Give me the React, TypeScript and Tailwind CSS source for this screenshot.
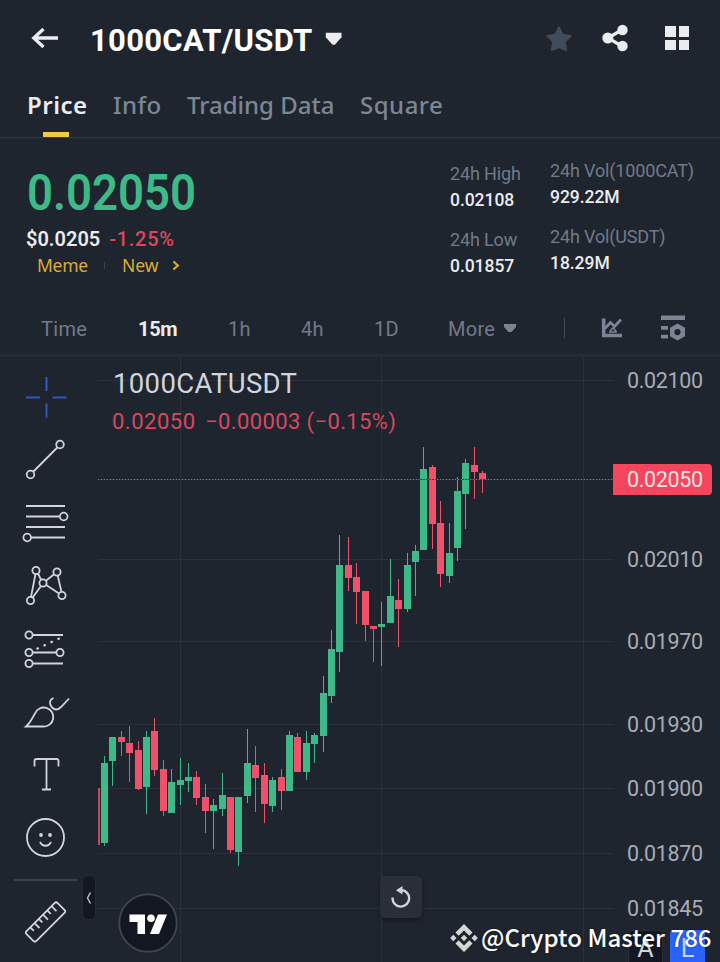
import { ReactNode } from "react";
import clsx from "clsx";

type Candle = {
  x: number;
  high: number;
  top: number;
  bottom: number;
  low: number;
  up: boolean;
};

const UP = "#3dba87";
const DOWN = "#f0506a";

// x, high, body top, body bottom, low, up
const rows: [number, number, number, number, number, 0 | 1][] = [
  [104, 756, 763, 843, 846, 1],
  [112, 737, 737, 761, 786, 1],
  [121, 731, 737, 742, 756, 0],
  [129, 726, 743, 753, 782, 0],
  [138, 741, 750, 789, 790, 0],
  [146, 731, 737, 787, 814, 1],
  [154, 718, 731, 770, 776, 0],
  [163, 760, 769, 811, 816, 0],
  [171, 769, 782, 813, 813, 1],
  [180, 758, 780, 785, 805, 1],
  [188, 763, 777, 781, 792, 1],
  [196, 771, 777, 798, 805, 0],
  [205, 784, 797, 811, 833, 0],
  [213, 799, 805, 811, 849, 1],
  [222, 773, 795, 809, 816, 1],
  [230, 797, 797, 850, 853, 0],
  [238, 797, 797, 852, 866, 1],
  [247, 729, 763, 796, 803, 1],
  [255, 746, 765, 778, 812, 0],
  [264, 763, 775, 804, 823, 0],
  [272, 777, 780, 806, 812, 1],
  [281, 769, 777, 791, 810, 0],
  [289, 731, 735, 791, 791, 1],
  [297, 733, 737, 772, 772, 0],
  [306, 731, 743, 772, 780, 1],
  [314, 733, 735, 744, 763, 1],
  [323, 676, 693, 736, 752, 1],
  [331, 630, 649, 696, 703, 1],
  [339, 535, 565, 652, 672, 1],
  [348, 537, 565, 578, 591, 0],
  [356, 563, 577, 592, 624, 0],
  [365, 591, 591, 625, 641, 0],
  [373, 626, 626, 629, 662, 0],
  [381, 602, 624, 627, 666, 1],
  [390, 559, 596, 623, 623, 1],
  [398, 579, 600, 609, 647, 0],
  [407, 553, 565, 609, 612, 1],
  [415, 545, 551, 562, 596, 1],
  [423, 447, 469, 550, 550, 1],
  [432, 465, 467, 524, 549, 0],
  [440, 501, 523, 574, 587, 0],
  [449, 523, 553, 576, 583, 1],
  [457, 477, 491, 548, 561, 1],
  [465, 459, 463, 494, 529, 1],
  [474, 447, 465, 472, 499, 0],
  [482, 471, 473, 480, 493, 0],
];

const candles: Candle[] = rows.map(([x, high, top, bottom, low, up]) => ({
  x,
  high,
  top,
  bottom,
  low,
  up: up === 1,
}));

const priceLevels = [
  { y: 380, label: "0.02100" },
  { y: 559, label: "0.02010" },
  { y: 641, label: "0.01970" },
  { y: 724, label: "0.01930" },
  { y: 788, label: "0.01900" },
  { y: 853, label: "0.01870" },
  { y: 908, label: "0.01845" },
];

function Header() {
  return (
    <header className="flex h-[78px] items-center pb-[2px] pl-[31px] pr-[31px]">
      <svg width="28" height="22" viewBox="0 0 28 22" className="text-[#eaecef]">
        <path
          d="M12.500 2 2.800 11l9.700 9M3 11h24"
          fill="none"
          stroke="currentColor"
          strokeWidth="3.300"
        />
      </svg>
      <h1 className="ml-[31px] mt-[5px] w-[223px] whitespace-nowrap font-['Roboto'] text-[31px] font-bold leading-none tracking-[0.3px] text-white">
        1000CAT/USDT
      </h1>
      <svg width="17" height="14" viewBox="0 0 17 14" className="ml-[12px] mt-[2px]">
        <path d="M.8.8h15.700v4.400L9.800 12.800H7.500L.8 5.200z" fill="#eaecef" />
      </svg>
      <div className="ml-auto flex items-center">
        <svg width="28" height="28" viewBox="0 0 28 28" className="mt-[2px]" fill="#414b5b">
          <path
            d="m14 2.500 3.600 7.200 8 1.200-5.900 5.600 1.500 8.500L14 22l-7.200 3 1.500-8.500L2.400 10.900l8-1.200z"
            stroke="#414b5b"
            strokeWidth="2"
            strokeLinejoin="round"
          />
        </svg>
        <svg width="28" height="28" viewBox="0 0 28 28" className="ml-[28px]" fill="#eaecef">
          <path d="M21.500 5.500 7 14l14.500 8.500" stroke="#eaecef" strokeWidth="3.200" fill="none" />
          <circle cx="21.500" cy="6" r="5.200" />
          <circle cx="6.800" cy="14" r="5.500" />
          <circle cx="21.500" cy="22" r="5.200" />
        </svg>
        <div className="ml-[36px] grid grid-cols-2 gap-[3px]">
          {[0, 1, 2, 3].map((i) => (
            <span key={i} className="size-[10.5px] bg-[#eaecef]" />
          ))}
        </div>
      </div>
    </header>
  );
}

const tabs = [
  { name: "Price", width: "w-[86px]" },
  { name: "Info", width: "w-[74px]" },
  { name: "Trading Data", width: "w-[173px] tracking-[0px]" },
  { name: "Square", width: "w-[90px]" },
];

function Tabs() {
  return (
    <nav className="flex h-[60px] border-b border-[#2f3742] pl-[27px] font-['Noto_Sans'] text-[24px] font-medium leading-[54px] tracking-[0.5px] text-[#7d8694]">
      {tabs.map((tab, i) => (
        <div
          key={tab.name}
          className={clsx("flex flex-col whitespace-nowrap", tab.width, i === 0 && "font-semibold text-[#eaecef]")}
        >
          {tab.name}
          {i === 0 && <span className="ml-[16px] h-[5px] w-[26px] bg-[#f0cb3f]" />}
        </div>
      ))}
    </nav>
  );
}

function Stat({ label, value }: { label: string; value: string }) {
  return (
    <div className="h-[66px] whitespace-nowrap">
      <div className="text-[18px] leading-[26px] tracking-[-0.15px] text-[#717a88]">{label}</div>
      <div className="text-[17.5px] font-medium leading-[26px] tracking-[-0.05px] text-[#eaecef]">{value}</div>
    </div>
  );
}

function Summary() {
  return (
    <section className="flex h-[165px] pl-[27px] font-['Roboto']">
      <div className="w-[423px] whitespace-nowrap pt-[30px]">
        <div className="w-[180px] origin-left scale-x-[0.92] text-[49.5px] font-semibold leading-[50px] text-[#3dba87]">
          0.02050
        </div>
        <div className="mt-[8px] text-[20px] leading-[26px]">
          <span className="-ml-px font-semibold text-[#eaecef]">$0.0205</span>
          <span className="ml-[9px] font-medium tracking-[0.7px] text-[#d9485f]">-1.25%</span>
        </div>
        <div className="ml-[10px] -mt-px flex items-center font-['Noto_Sans'] text-[17.5px] leading-[28px] tracking-[-0.3px] text-[#dcae31]">
          <span className="w-[67px]">Meme</span>
          <span className="h-[7px] w-px bg-[#3a424e]" />
          <span className="ml-[17px] w-[50px] tracking-normal">New</span>
          <svg width="8" height="11" viewBox="0 0 8 11" fill="none" stroke="#e0ab22" strokeWidth="2.200">
            <path d="m1.500 1.500 4.300 4-4.300 4" />
          </svg>
        </div>
      </div>
      <div className="w-[100px] pt-[23px]">
        <Stat label="24h High" value="0.02108" />
        <Stat label="24h Low" value="0.01857" />
      </div>
      <div className="pt-[20px]">
        <Stat label="24h Vol(1000CAT)" value="929.22M" />
        <Stat label="24h Vol(USDT)" value="18.29M" />
      </div>
    </section>
  );
}

const intervals = [
  { name: "Time", width: "w-[97px]" },
  { name: "15m", width: "w-[90px]" },
  { name: "1h", width: "w-[73px]" },
  { name: "4h", width: "w-[73px]" },
  { name: "1D", width: "w-[74px]" },
  { name: "More", width: "w-[55px]" },
];

function IntervalBar() {
  return (
    <div className="flex h-[51px] items-center pl-[41px] font-['Roboto'] text-[20px] tracking-[0.3px] text-[#717a88]">
      {intervals.map((item) => (
        <span
          key={item.name}
          className={clsx(item.width, item.name === "15m" && "font-bold tracking-[-0.3px] text-[#eaecef]")}
        >
          {item.name}
        </span>
      ))}
      <svg width="14" height="9" viewBox="0 0 14 9" className="-mt-px">
        <path d="M1 0h12v3L8.500 8h-3L1 3z" fill="#7b8493" />
      </svg>
      <span className="ml-[47px] -mt-[2px] h-[20px] w-px bg-[#414956]" />
      <svg width="22" height="22" viewBox="0 0 22 22" className="-mt-[2px] ml-[36px]" fill="none" stroke="#7d8494">
        <path d="M2.700 1.500v17H21" strokeWidth="3.600" />
        <path d="m4 11.500 5.500-6 4 4L20 2.500" strokeWidth="2.700" />
        <path d="M8 15h8M9 14l3-3 3 3" strokeWidth="1.700" />
      </svg>
      <svg width="26" height="26" viewBox="0 0 26 26" className="-mt-px ml-[37px]" fill="#7d8494">
        <path d="M1 .5h24v4.500H1zM1 11h7v3.700H1zM1 19.800h7v3.700H1z" />
        <path
          fillRule="evenodd"
          d="M17.500 8.500 25 12.800v8.400l-7.500 4.300-7.500-4.300v-8.400zM17.500 14a3.100 3.100 0 1 0 0 6.200 3.100 3.100 0 0 0 0-6.200z"
        />
      </svg>
    </div>
  );
}

function Tool({ children, className }: { children: ReactNode; className?: string }) {
  return (
    <svg
      width="48"
      height="48"
      viewBox="0 0 48 48"
      fill="none"
      stroke="#d1d4dc"
      strokeWidth="1.800"
      className={clsx("shrink-0", className)}
    >
      {children}
    </svg>
  );
}

function Toolbar() {
  return (
    <aside className="flex w-[98px] flex-col gap-[15px] pl-[22px] pt-[14px]">
      <Tool className="text-[#3157c4]">
        <path d="M24.500 6v14M24.500 32.500v14M4 26.500h14M30.500 26.500h14" stroke="currentColor" strokeWidth="2" />
      </Tool>
      <Tool>
        <circle cx="8.500" cy="40.500" r="3.800" />
        <circle cx="38" cy="10.500" r="3.800" />
        <path d="m11.500 37.500 23.800-24" />
      </Tool>
      <Tool>
        <path d="M4 9h39M4 19.500h33.500M4 30h39M9 40.500h34" />
        <circle cx="41.700" cy="19.500" r="3.800" />
        <circle cx="5.200" cy="40.500" r="3.800" />
      </Tool>
      <Tool>
        <circle cx="14" cy="10.500" r="3.600" />
        <circle cx="35" cy="12" r="3.600" />
        <circle cx="21" cy="23" r="3.600" />
        <circle cx="40" cy="35.500" r="3.600" />
        <circle cx="8.500" cy="40.500" r="3.600" />
        <path d="M13.500 14 9 37M35.700 15.500l3.700 16M16 13.500l3.200 6.500M32 14.300 24 20.700M24.200 25 37 33.500M19 26l-8.300 11.500" />
      </Tool>
      <Tool>
        <circle cx="7" cy="12" r="3.600" />
        <circle cx="7" cy="29.500" r="3.600" />
        <circle cx="38" cy="29.500" r="3.600" />
        <circle cx="7" cy="40.500" r="3.600" />
        <path d="M10.600 12H41M10.600 29.500h24M10.600 40.500H41" />
        <path d="m14.500 26 26-12" strokeWidth="2.200" strokeDasharray="2.500 5.200" />
      </Tool>
      <Tool>
        <path d="M4 40.500c5-4 5.500-7.500 9-13a9.500 9.500 0 1 1 8 13zM31.500 12c-4.500 2-4.500 6-1.500 9.500 3 3 6 2.500 9-.500l8-8.500" />
      </Tool>
      <Tool>
        <path d="M12.500 17.500V12q0-2 2-2h20q2 0 2 2v5.500M24.500 10v30.500M20 40.500h9" />
      </Tool>
      <Tool>
        <circle cx="23.500" cy="25.500" r="18.500" />
        <g fill="#d1d4dc" stroke="none">
          <circle cx="19" cy="23" r="1.900" />
          <circle cx="28" cy="23" r="1.900" />
        </g>
        <path d="M18 30c2.500 5 8.500 5 11 0" />
      </Tool>
      <div className="-mb-px -ml-2 mt-[4px] h-[2px] w-[63px] shrink-0 bg-[#3d434e]" />
      <Tool>
        <g transform="rotate(-45 23.500 27)">
          <rect x="1.500" y="20" width="44" height="14" rx="2.200" />
          <path d="M9 20v5M15 20v7M21 20v5M27 20v7M33 20v5M39 20v7" />
        </g>
      </Tool>
    </aside>
  );
}

function Chart() {
  return (
    <svg width="622" height="605" viewBox="98 357 622 605" className="shrink-0" fontFamily="Roboto, sans-serif">
      <g fill="#2a313c">
        {priceLevels.map((level) => (
          <rect key={level.label} x="98" y={level.y} width="515" height="1" />
        ))}
        {[180, 381, 583].map((x) => (
          <rect key={x} x={x} y="357" width="1" height="605" />
        ))}
      </g>

      <rect x="98" y="788" width="2" height="57" fill="#c44a5e" />
      {candles.map((c) => (
        <g key={c.x} fill={c.up ? UP : DOWN}>
          <rect x={c.x} y={c.high} width="1" height={c.low - c.high} />
          <rect x={c.x - 3} y={c.top} width="7" height={c.bottom - c.top} />
        </g>
      ))}
      <path d="M98 479.500h515" stroke="#5c2c3a" />
      <path d="M98 479.500h515" stroke="#d05468" strokeDasharray="1 2" />

      <text x="113" y="393" fontSize="27.500" fill="#d1d4dc" textLength="184">
        1000CATUSDT
      </text>
      <g fontSize="22" fill="#d9485f">
        <text x="112" y="429" textLength="83">
          0.02050
        </text>
        <text x="205" y="429" textLength="191">
          −0.00003 (−0.15%)
        </text>
      </g>

      <g fontSize="21.500" fill="#a6abb5">
        {priceLevels.map((level) => (
          <text key={level.label} x="627" y={level.y + 8} textLength="76">
            {level.label}
          </text>
        ))}
      </g>
      <path d="M613 464h95a4 4 0 0 1 4 4v23a4 4 0 0 1-4 4h-95z" fill="#f6465d" />
      <text x="627" y="487" fontSize="21.500" fill="#fbe3e6" textLength="76">
        0.02050
      </text>
    </svg>
  );
}

function ChartControls() {
  return (
    <>
      <div className="absolute left-[82px] top-[518px] flex h-[45px] w-[14px] items-center justify-center rounded-[6px] border border-[#252a34] bg-[#131722]">
        <svg width="6" height="12" viewBox="0 0 6 12" fill="none" stroke="#b7bbc4" strokeWidth="1.500">
          <path d="M4.500.5 1.500 6l3 5.500" />
        </svg>
      </div>
      <svg width="60" height="60" viewBox="0 0 60 60" className="absolute left-[118px] top-[536px]">
        <circle cx="30" cy="30" r="28.700" fill="#131722" stroke="#42454f" strokeWidth="1.800" />
        <g fill="#fff">
          <path d="M11.500 21.500H27V41h-7.500V29h-8zM40 21.500h9L41 41h-9z" />
          <circle cx="33" cy="25.300" r="3.800" />
        </g>
      </svg>
      <button className="absolute left-[380px] top-[519px] flex size-[42px] items-center justify-center rounded-[5px] bg-[#2a2e39] shadow-[0_2px_4px_rgba(0,0,0,0.4)]">
        <svg width="22" height="22" viewBox="0 0 22 22">
          <path d="M2.600 11.500a8.300 8.300 0 1 0 8.300-7.500" fill="none" stroke="#d1d4dc" strokeWidth="2.400" />
          <path d="M12.500 0v8.400L6 4.200z" fill="#d1d4dc" />
        </svg>
      </button>
      <div className="absolute left-[628px] top-[573px] flex gap-[7px] font-['Roboto'] text-[25px] leading-[35px] text-[#d1d4dc]">
        <span className="h-[40px] w-[35px] rounded-[4px] border border-[#2a2e39] bg-[#131722] text-center">A</span>
        <span className="h-[40px] w-[35px] rounded-[4px] bg-[#2962ff] text-center leading-[37px] text-[#c8d6ff]">L</span>
      </div>
      <div className="absolute left-[450px] top-[562px] flex items-center whitespace-nowrap font-['Noto_Sans_CJK_SC',sans-serif] text-[24px] font-medium leading-[36px] tracking-[0.05px] text-white [text-shadow:0_0_2px_rgba(0,0,0,0.4)]">
        <svg width="28" height="28" viewBox="0 0 28 28" fill="#d6d6d6" className="mt-px">
          <path d="m14 0 8.500 8.500-3.200 3.200L14 6.400l-5.300 5.300-3.200-3.200zM14 28l8.500-8.500-3.200-3.200-5.300 5.300-5.300-5.300-3.200 3.200zM14 10.800l3.200 3.200-3.200 3.200-3.200-3.200zM3.300 10.800 6.500 14l-3.200 3.200L.1 14zM24.700 10.800l3.200 3.200-3.200 3.200-3.200-3.200z" />
        </svg>
        <span className="ml-[3px]">@Crypto Master 786</span>
      </div>
    </>
  );
}

export default function App() {
  return (
    <div className="h-[962px] w-[720px] overflow-hidden bg-[#1f252f]">
      <Header />
      <Tabs />
      <Summary />
      <IntervalBar />
      <div className="h-[3px] bg-[#252c36]" />
      <main className="relative flex h-[605px] overflow-hidden">
        <Toolbar />
        <Chart />
        <ChartControls />
      </main>
    </div>
  );
}
